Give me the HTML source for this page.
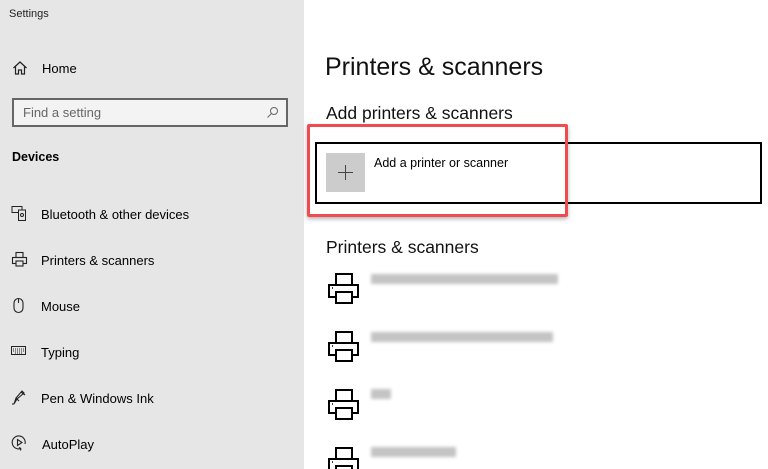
<!DOCTYPE html>
<html style="overflow:hidden;width:768px;height:469px"><head><meta charset="utf-8"><style>
*{margin:0;padding:0;box-sizing:border-box}
body{width:768px;height:469px;overflow:hidden;background:#fff;font-family:"Liberation Sans",sans-serif;position:relative;color:#000}
.side{position:absolute;left:0;top:0;width:304px;height:469px;background:#e6e6e6}
.t{position:absolute;white-space:nowrap}
.blur{position:absolute;height:10px;background:#c4c4c4;filter:blur(1.5px)}
svg{position:absolute}
</style></head><body>
<div class="side">
<div class="t" style="left:9px;top:8px;font-size:11px;color:#222">Settings</div>
<svg style="left:12px;top:60px" width="16" height="16" viewBox="0 0 16 16" fill="none" stroke="#222" stroke-width="1.2"><path d="M1.5 8L8 2l6.5 6M3.5 6.5V14h3v-4h3v4h3V6.5"/></svg>
<div class="t" style="left:42px;top:61px;font-size:13px">Home</div>
<div style="position:absolute;left:12px;top:98px;width:276px;height:29px;border:2px solid #666;background:#f3f3f3"></div>
<div class="t" style="left:23px;top:105px;font-size:13px;color:#666">Find a setting</div>
<svg style="left:266px;top:106px" width="13" height="13" viewBox="0 0 13 13" fill="none" stroke="#666" stroke-width="1"><circle cx="8" cy="5" r="3.5"/><path d="M5.5 7.5L1.5 11.5"/></svg>
<div class="t" style="left:12px;top:150px;font-size:12.5px;font-weight:bold">Devices</div>
<svg style="left:11px;top:205px" width="17" height="17" viewBox="0 0 17 17" fill="none" stroke="#222" stroke-width="1"><rect x="1" y="1.5" width="10" height="6"/><rect x="7.5" y="5" width="7" height="10.5" fill="#e6e6e6"/><circle cx="11" cy="10" r="1.5"/></svg>
<div class="t" style="left:41px;top:207px;font-size:13px">Bluetooth &amp; other devices</div>
<svg style="left:11px;top:251px" width="17" height="17" viewBox="0 0 17 17" fill="none" stroke="#222" stroke-width="1.1"><rect x="5" y="1.5" width="7" height="5"/><rect x="1.5" y="6.5" width="14" height="6"/><rect x="5" y="10" width="7" height="5" fill="#e6e6e6"/></svg>
<div class="t" style="left:41px;top:253px;font-size:13px">Printers &amp; scanners</div>
<svg style="left:12px;top:297px" width="14" height="17" viewBox="0 0 14 17" fill="none" stroke="#222" stroke-width="1.1"><rect x="2" y="1.5" width="9" height="14" rx="4.5"/><path d="M6.5 2v4"/></svg>
<div class="t" style="left:41px;top:299px;font-size:13px">Mouse</div>
<svg style="left:11px;top:346px" width="16" height="10" viewBox="0 0 16 10" fill="none" stroke="#222" stroke-width="1"><rect x="0.5" y="0.5" width="14" height="8"/><path d="M2 3h11M2 5h11M4 7h7" stroke-dasharray="1 1"/></svg>
<div class="t" style="left:41px;top:345px;font-size:13px">Typing</div>
<svg style="left:11px;top:389px" width="16" height="17" viewBox="0 0 16 17" fill="none" stroke="#222" stroke-width="1.1"><path d="M3 15l2-6 6-7 2 2-7 6zM5 9l3 3M10 3l4 3"/><path d="M1 15h2"/></svg>
<div class="t" style="left:41px;top:391px;font-size:13px">Pen &amp; Windows Ink</div>
<svg style="left:11px;top:434px" width="17" height="18" viewBox="0 0 17 18" fill="none" stroke="#222" stroke-width="1.1"><path d="M10 14.5A6.5 6.5 0 1 1 14 10"/><path d="M6.5 5.5v6l4.5-3z"/><path d="M10 14.5l-2-1M10 14.5l-.5 2"/></svg>
<div class="t" style="left:42px;top:437px;font-size:13px">AutoPlay</div>
</div>
<div class="t" style="left:325px;top:53px;font-size:25px;color:#111">Printers &amp; scanners</div>
<div class="t" style="left:326px;top:103px;font-size:17.5px;color:#111">Add printers &amp; scanners</div>
<div style="position:absolute;left:315px;top:142px;width:447px;height:62px;border:2px solid #000"></div>
<div style="position:absolute;left:326px;top:153px;width:39px;height:39px;background:#ccc"></div>
<svg style="left:337px;top:164px" width="17" height="17" viewBox="0 0 17 17" stroke="#444" stroke-width="1"><path d="M8.5 1v15M1 8.5h15"/></svg>
<div class="t" style="left:374px;top:156px;font-size:12.5px">Add a printer or scanner</div>
<div style="position:absolute;left:307px;top:124px;width:261px;height:93px;border:3px solid #ef4c52;border-radius:2px;box-shadow:0 2px 4px rgba(0,0,0,.3)"></div>
<div class="t" style="left:326px;top:237px;font-size:17.5px;color:#111">Printers &amp; scanners</div>
<div style="position:absolute;left:0;top:0;width:768px;height:469px;overflow:hidden">
<svg style="left:327px;top:272px" width="32" height="32" viewBox="0 0 32 32" fill="none" stroke="#000" stroke-width="2"><path d="M9 13V2h16v11"/><path d="M9 25H2V13h29v12h-6"/><rect x="9" y="20" width="16" height="11"/><path d="M5 16h1" stroke-width="1.5"/></svg>
<svg style="left:327px;top:330px" width="32" height="32" viewBox="0 0 32 32" fill="none" stroke="#000" stroke-width="2"><path d="M9 13V2h16v11"/><path d="M9 25H2V13h29v12h-6"/><rect x="9" y="20" width="16" height="11"/><path d="M5 16h1" stroke-width="1.5"/></svg>
<svg style="left:327px;top:388px" width="32" height="32" viewBox="0 0 32 32" fill="none" stroke="#000" stroke-width="2"><path d="M9 13V2h16v11"/><path d="M9 25H2V13h29v12h-6"/><rect x="9" y="20" width="16" height="11"/><path d="M5 16h1" stroke-width="1.5"/></svg>
<svg style="left:327px;top:446px" width="32" height="23" viewBox="0 0 32 23" fill="none" stroke="#000" stroke-width="2"><path d="M9 13V2h16v11"/><path d="M9 25H2V13h29v12h-6"/><rect x="9" y="20" width="16" height="11"/><path d="M5 16h1" stroke-width="1.5"/></svg>
</div>
<div class="blur" style="left:371px;top:274px;width:187px"></div>
<div class="blur" style="left:371px;top:332px;width:182px"></div>
<div class="blur" style="left:371px;top:389px;width:20px"></div>
<div class="blur" style="left:371px;top:447px;width:85px"></div>
</body></html>
